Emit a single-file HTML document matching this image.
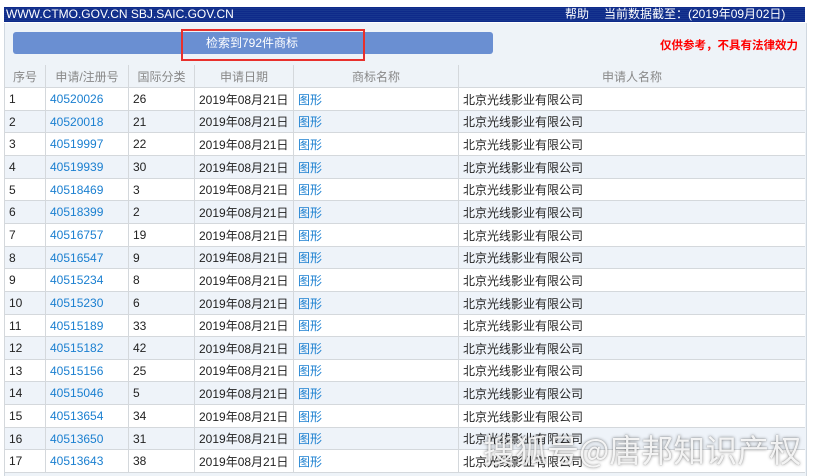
<!DOCTYPE html>
<html><head><meta charset="utf-8"><style>
body{margin:0;width:813px;height:476px;overflow:hidden;background:#fff;font-family:"Liberation Sans","Noto Sans CJK SC",sans-serif;position:relative}
.top{position:absolute;left:4px;top:7px;width:801px;height:15px;background:repeating-linear-gradient(#0e2a8a 0 1px,#17368f 1px 2px);color:#fff;font-size:12px;line-height:15px}
.box{position:absolute;left:4px;top:23px;width:801px;height:453px;background:#eef3f8;border-left:1px solid #d0d8e0;border-right:1px solid #d0d8e0}
.btn{position:absolute;left:13px;top:32px;width:480px;height:22px;background:#6a8fd2;border-radius:3px;color:#fff;font-size:12px;line-height:22px}
.red{position:absolute;left:181px;top:29px;width:180px;height:28px;border:2px solid #e8302c}
.warn{position:absolute;left:660px;top:37px;color:#f00;font-size:11.5px;font-weight:bold;white-space:nowrap}
.r{position:absolute;left:4px;width:801px;border-bottom:1px solid #d4d8dc;font-size:12px;color:#222}
.r span{position:absolute;top:0;bottom:0;border-left:1px solid #d4d8dc;padding-left:4px;box-sizing:border-box;display:flex;align-items:center}
.h{color:#888}
.h span{padding-left:0;justify-content:center}
.b{color:#1a7fd0}
.wm{position:absolute;left:483px;top:426px;font-size:32px;white-space:nowrap;color:rgba(255,255,255,.9);font-family:"Noto Sans CJK SC",sans-serif;text-shadow:0 0 3px rgba(0,0,0,.45),0 0 1px rgba(0,0,0,.3)}
</style></head><body>
<div class="top"><span style="position:absolute;left:2px">WWW.CTMO.GOV.CN SBJ.SAIC.GOV.CN</span><span style="position:absolute;left:561px">帮助</span><span style="position:absolute;left:600px">当前数据截至：(2019年09月02日)</span></div>
<div class="box"></div>
<div class="btn"><span style="position:absolute;left:193px">检索到792件商标</span></div>
<div class="red"></div>
<div class="warn">仅供参考，不具有法律效力</div>
<div id="t"></div>
<div class="wm">搜狐号@唐邦知识产权</div>
<script>
var nums=["40520026","40520018","40519997","40519939","40518469","40518399","40516757","40516547","40515234","40515230","40515189","40515182","40515156","40515046","40513654","40513650","40513643"];
var cls=[26,21,22,30,3,2,19,9,8,6,33,42,25,5,34,31,38];
var cols=[0,41,124,190,289,454,801];
function row(y,h,cells,extra,bg){var s='<div class="r '+extra+'" style="top:'+y+'px;height:'+h+'px;background:'+bg+'">';for(var i=0;i<6;i++){s+='<span'+((i==1||i==4)&&!extra?' class="b"':'')+' style="left:'+cols[i]+'px;width:'+(cols[i+1]-cols[i])+'px">'+cells[i]+'</span>';}return s+'</div>';}
var s=row(65,22,["序号","申请/注册号","国际分类","申请日期","商标名称","申请人名称"],"h","#eef3f8");
for(var k=0;k<17;k++){var y0=Math.round(88+k*22.65),y1=Math.round(88+(k+1)*22.65);s+=row(y0,y1-y0-1,[k+1,nums[k],cls[k],"2019年08月21日","图形","北京光线影业有限公司"],"",k%2?"#eef3f9":"#fff");}
document.getElementById('t').innerHTML=s;
</script>
</body></html>
